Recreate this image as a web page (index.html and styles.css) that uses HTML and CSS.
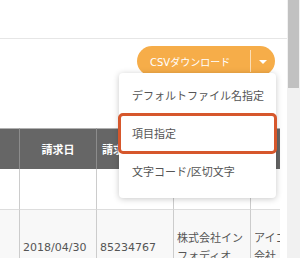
FILE: index.html
```html
<!DOCTYPE html>
<html lang="ja">
<head>
<meta charset="utf-8">
<link rel="stylesheet" href="styles.css">
</head>
<body>
<div class="page">
  <div class="main">
    <div class="topbar"></div>
    <div class="toolbar">
      <div class="dl">
        <div class="btn">
          <span class="btn-label">CSVダウンロード</span>
          <span class="btn-sep"></span>
          <span class="btn-caret"><span class="tri"></span></span>
        </div>
        <div class="menu">
          <div class="item">デフォルトファイル名指定</div>
          <div class="item item-hl">項目指定</div>
          <div class="item">文字コード/区切文字</div>
        </div>
      </div>
    </div>
    <div class="table-wrap">
      <div class="grid">
        <div class="th"></div>
        <div class="th">請求日</div>
        <div class="th">請求先コード</div>
        <div class="th">請求先名</div>
        <div class="th"></div>

        <div class="tf"></div>
        <div class="tf"></div>
        <div class="tf"></div>
        <div class="tf"></div>
        <div class="tf"></div>

        <div class="td"></div>
        <div class="td">2018/04/30</div>
        <div class="td">85234767</div>
        <div class="td">株式会社インフォディオ</div>
        <div class="td">アイコム株式会社</div>
      </div>
    </div>
  </div>
  <div class="scrollbar"><div class="thumb"></div></div>
</div>
</body>
</html>
```

FILE: styles.css
```css
* { box-sizing: border-box; }
html, body { margin: 0; padding: 0; background: #fff; }
body {
  font-family: "DejaVu Sans", "Noto Sans CJK JP", sans-serif;
  font-size: 11px;
  color: #555;
  width: 300px;
  height: 258px;
  overflow: hidden;
}
.page { display: flex; height: 258px; }
.main { width: 287px; overflow: hidden; }
.scrollbar { width: 13px; height: 258px; background: #f1f1f1; padding-left: 1px; }
.thumb { width: 11px; height: 88px; background: #c1c1c1; }

.topbar { height: 39px; border-bottom: 1px solid #e6e6e6; }

.toolbar { display: flex; justify-content: flex-end; padding: 7px 12px 0 0; }
.dl { position: relative; }
.btn {
  display: flex; align-items: center;
  height: 30px; width: 138px;
  background: #f6ad49; color: #fff;
  border-radius: 15px;
  font-size: 10px;
}
.btn-label { width: 113px; padding-left: 13px; white-space: nowrap; }
.btn-sep { width: 1px; height: 22px; background: rgba(255,255,255,0.6); }
.btn-caret { flex: 1; display: flex; justify-content: center; align-items: center; padding-top: 1px; }
.tri { width: 0; height: 0; border-left: 4px solid transparent; border-right: 4px solid transparent; border-top: 4px solid #fff; }

.menu {
  position: absolute; top: 27px; right: -1px; width: 157px;
  background: #fff; border-radius: 4px;
  box-shadow: 0 1px 6px rgba(0,0,0,0.22);
  padding: 5px 0 6px;
  z-index: 5;
}
.item { position: relative; height: 38px; line-height: 38px; padding-left: 13px; white-space: nowrap; color: #555; }
.item-hl::after {
  content: ""; position: absolute; left: -1px; right: -1px; top: -3px; bottom: 0;
  border: 3px solid #d6572c; border-radius: 5px;
}

.table-wrap { width: 280px; overflow: hidden; margin-top: 52px; }
.grid { display: grid; grid-template-columns: 20px 77px 77px 77px 77px; width: 308px; }
.th {
  height: 41px; background: #666; color: #fff; font-weight: bold;
  border-top: 1px solid #b0b0b0; border-right: 1px solid #8c8c8c;
  display: flex; align-items: center; justify-content: center; white-space: nowrap;
}
.tf { height: 41px; border-right: 1px solid #ccc; border-bottom: 1px solid #ddd; background: #fff; }
.td {
  background: #f8f8f8; border-right: 1px solid #ccc;
  padding: 20px 3px; line-height: 18px;
  display: flex; align-items: center;
  min-height: 76px;
}
```
